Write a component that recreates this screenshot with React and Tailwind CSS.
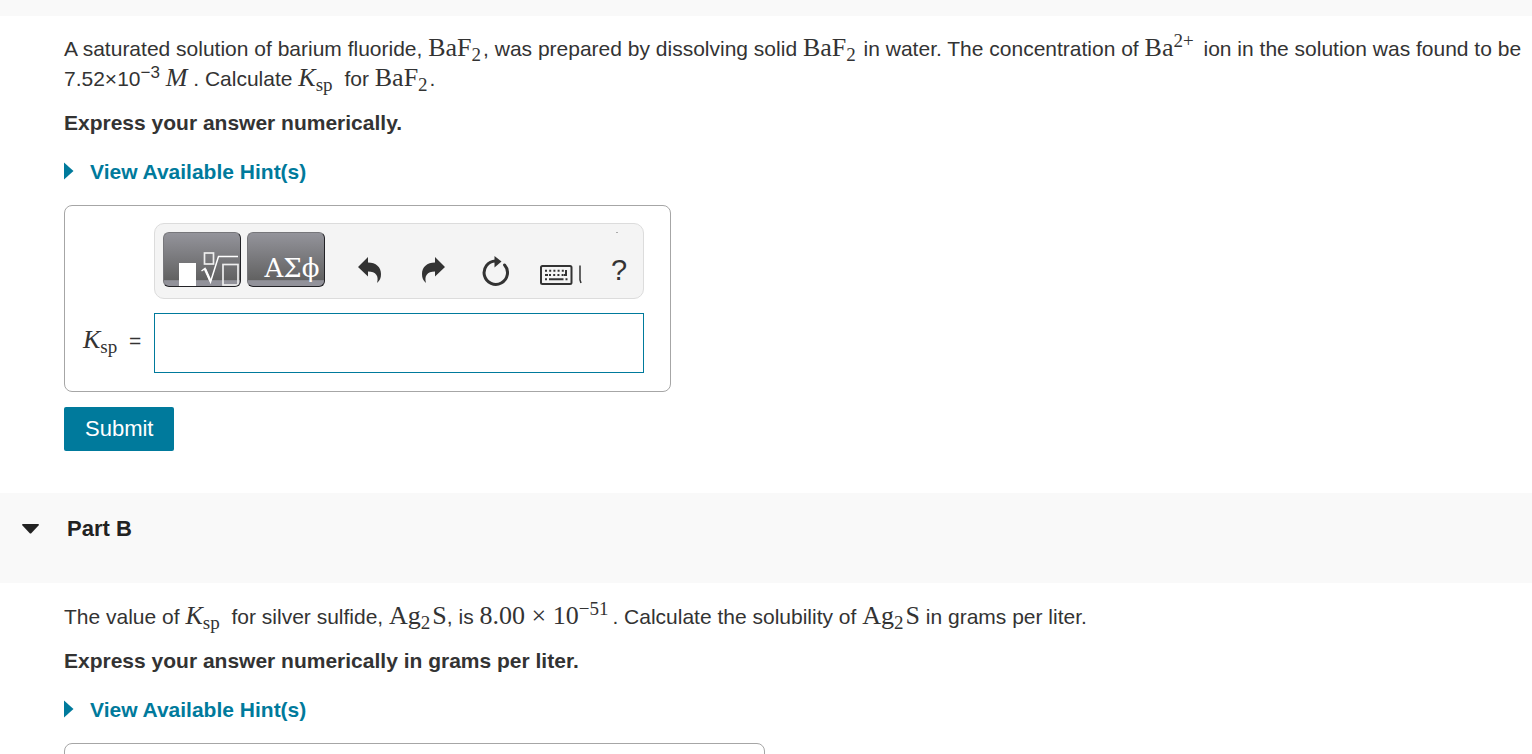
import { useState } from "react";

const iconColor = "#333333";

// Chemistry and math notation is set in serif inside the sans text
function Math({ children, italic }) {
  return (
    <span
      className={`font-['Liberation_Serif',serif] text-[26px] leading-none ${
        italic ? "italic" : ""
      }`}
    >
      {children}
    </span>
  );
}

function Sub({ children }) {
  return <sub className="mr-0.5 text-[19px] not-italic">{children}</sub>;
}

function Sup({ children }) {
  return <sup className="mr-1 text-[19px]">{children}</sup>;
}

function Ksp() {
  return (
    <span className="mr-1">
      <Math>
        <i>K</i>
        <Sub>sp</Sub>
      </Math>
    </span>
  );
}

function HintButton() {
  return (
    <button
      type="button"
      className="mt-[19px] flex items-center font-bold text-[#007a9c]"
    >
      <svg width="10" height="18" viewBox="0 0 10 18" className="mr-4 mb-0.5">
        <path d="M0 0.5L9.5 9L0 17.5Z" fill="#007a9c" />
      </svg>
      View Available Hint(s)
    </button>
  );
}

function Toolbar() {
  const dark =
    "w-[78px] h-[55px] overflow-hidden rounded-md border border-[#77777b] border-r-[#222226] border-b-[#222226] bg-[linear-gradient(to_bottom,#94949b_0%,#626262_88%,#92929a_90%,#92929a_100%)]";

  return (
    <div className="flex h-[76px] rounded-[10px] border border-[#dcdcdc] bg-[#f4f4f4] p-2">
      <button type="button" aria-label="Templates" className={dark}>
        <svg width="76" height="53" viewBox="0 0 76 53" fill="none">
          <rect x="15" y="30" width="17" height="23" fill="#fff" />
          <rect x="40.5" y="20" width="9" height="11" stroke="#eee" strokeWidth="1.7" />
          <path d="M37.5 38L41 35.5L46.5 49L54.5 23.5H74" stroke="#fff" strokeWidth="1.5" />
          <path d="M41 36L46.5 48" stroke="#fff" strokeWidth="2.4" />
          <rect x="59" y="31.5" width="15" height="20.5" stroke="#eee" strokeWidth="1.7" />
        </svg>
      </button>
      <button
        type="button"
        aria-label="Symbols"
        className={`${dark} ml-1.5 pt-4 pl-3 text-center font-['DejaVu_Serif',serif] text-[26px] leading-[36px] text-white`}
      >
        ΑΣϕ
      </button>

      <button
        type="button"
        aria-label="Undo"
        className="ml-3.5 flex w-[62px] justify-center pt-6"
      >
        <svg width="24" height="28" viewBox="0 0 24 28">
          <path
            d="M0 11L10 1V6.5C18 6.5 23 11 23 18C23 22 22 24.5 19 27C21 20 18 15.5 10 15.5V20.5Z"
            fill={iconColor}
          />
        </svg>
      </button>
      <button
        type="button"
        aria-label="Redo"
        className="flex w-16 justify-center pt-6"
      >
        <svg width="24" height="28" viewBox="0 0 24 28">
          <path
            d="M24 11L14 1V6.5C6 6.5 1 11 1 18C1 22 2 24.5 5 27C3 20 6 15.5 14 15.5V20.5Z"
            fill={iconColor}
          />
        </svg>
      </button>
      <button
        type="button"
        aria-label="Reset"
        className="flex w-[60px] justify-center pt-6"
      >
        <svg width="28" height="31" viewBox="0 0 28 31">
          <path
            d="M14.5 5A11.7 11.7 0 1 0 23.6 9"
            fill="none"
            stroke={iconColor}
            strokeWidth="3"
            strokeLinecap="round"
          />
          <path d="M13.5 0L20.5 5.5L13.5 11.5Z" fill={iconColor} />
        </svg>
      </button>
      <button
        type="button"
        aria-label="Keyboard shortcuts"
        className="flex w-[72px] justify-center pt-8"
      >
        <svg width="42" height="22" viewBox="0 0 42 22" fill="none" stroke={iconColor}>
          <rect x="1" y="2" width="30.5" height="18" rx="1.5" strokeWidth="2" />
          <path d="M5 6.8H25M9 11H24" strokeWidth="2" strokeDasharray="2 2.2" />
          <path d="M5 11H8M24 11H27M26 6V12M5 15.2H7M9 15.2H23.5M25.5 15.2H27.5" strokeWidth="2" />
          <path d="M40 1.5V16L41 19" strokeWidth="1.5" />
        </svg>
      </button>
      <button
        type="button"
        aria-label="Help"
        className="flex w-[38px] flex-col items-center pl-1.5 text-[29px] leading-[34px] text-[#333333]"
      >
        <span className="mr-1 mb-5 h-px w-0.5 bg-[#aaaaaa]" />
        ?
      </button>
    </div>
  );
}

export default function App() {
  const [answer, setAnswer] = useState("");

  return (
    <main className="h-screen overflow-hidden bg-white font-['Liberation_Sans',Arial,sans-serif] text-[21px] leading-[30px] text-[#333333]">
      <div className="h-4 bg-[#f9f9f9]" />

      {/* Part A */}
      <section className="pt-[18px] pr-2 pl-16">
        <p>
          A saturated solution of barium fluoride,{" "}
          <Math>
            BaF<Sub>2</Sub>
          </Math>
          , was prepared by dissolving solid{" "}
          <Math>
            BaF<Sub>2</Sub>
          </Math>{" "}
          in water. The concentration of{" "}
          <Math>
            Ba<Sup>2+</Sup>
          </Math>{" "}
          ion in the solution was found to be 7.52×10
          <sup className="text-[17px]">−3</sup> <Math italic>M</Math> . Calculate{" "}
          <Ksp /> for{" "}
          <Math>
            BaF<Sub>2</Sub>
          </Math>
          .
        </p>
        <p className="mt-3.5 font-bold">Express your answer numerically.</p>
        <HintButton />

        <form onSubmit={(e) => e.preventDefault()}>
          <div className="mt-[18px] flex w-fit items-end rounded-lg border border-[#a6a6a6] pt-[17px] pr-[26px] pb-[18px] pl-[18px]">
            <label htmlFor="ksp" className="mb-[17px] w-[71px]">
              <Ksp /> =
            </label>
            <div>
              <Toolbar />
              <input
                id="ksp"
                type="text"
                value={answer}
                onChange={(e) => setAnswer(e.target.value)}
                className="mt-3.5 block h-[60px] w-full border border-[#007a9c] px-3 outline-none"
              />
            </div>
          </div>
          <button
            type="submit"
            className="mt-[15px] block h-11 rounded-xs bg-[#007a9c] px-[21px] text-[22px] text-white"
          >
            Submit
          </button>
        </form>
      </section>

      {/* Part B */}
      <h2 className="mt-[42px] h-[90px] bg-[#f9f9f9] pt-[21px] pl-[22px]">
        <button
          type="button"
          className="flex items-center text-[22px] font-bold text-[#222222]"
        >
          <svg width="17" height="10" viewBox="0 0 17 10" className="mr-7">
            <path d="M0 1Q0 0 1 0H16Q17 0 17 1L9 9.5H8Z" fill="#222222" />
          </svg>
          Part B
        </button>
      </h2>
      <section className="pt-[19px] pr-2 pl-16">
        <p>
          The value of <Ksp /> for silver sulfide,{" "}
          <Math>
            Ag<Sub>2</Sub>S
          </Math>
          , is{" "}
          <Math>
            8.00 × 10<Sup>−51</Sup>
          </Math>
          . Calculate the solubility of{" "}
          <Math>
            Ag<Sub>2</Sub>S
          </Math>{" "}
          in grams per liter.
        </p>
        <p className="mt-3.5 font-bold">
          Express your answer numerically in grams per liter.
        </p>
        <HintButton />
        <div className="mt-[18px] h-40 w-full max-w-[701px] rounded-lg border border-[#a6a6a6]" />
      </section>
    </main>
  );
}
